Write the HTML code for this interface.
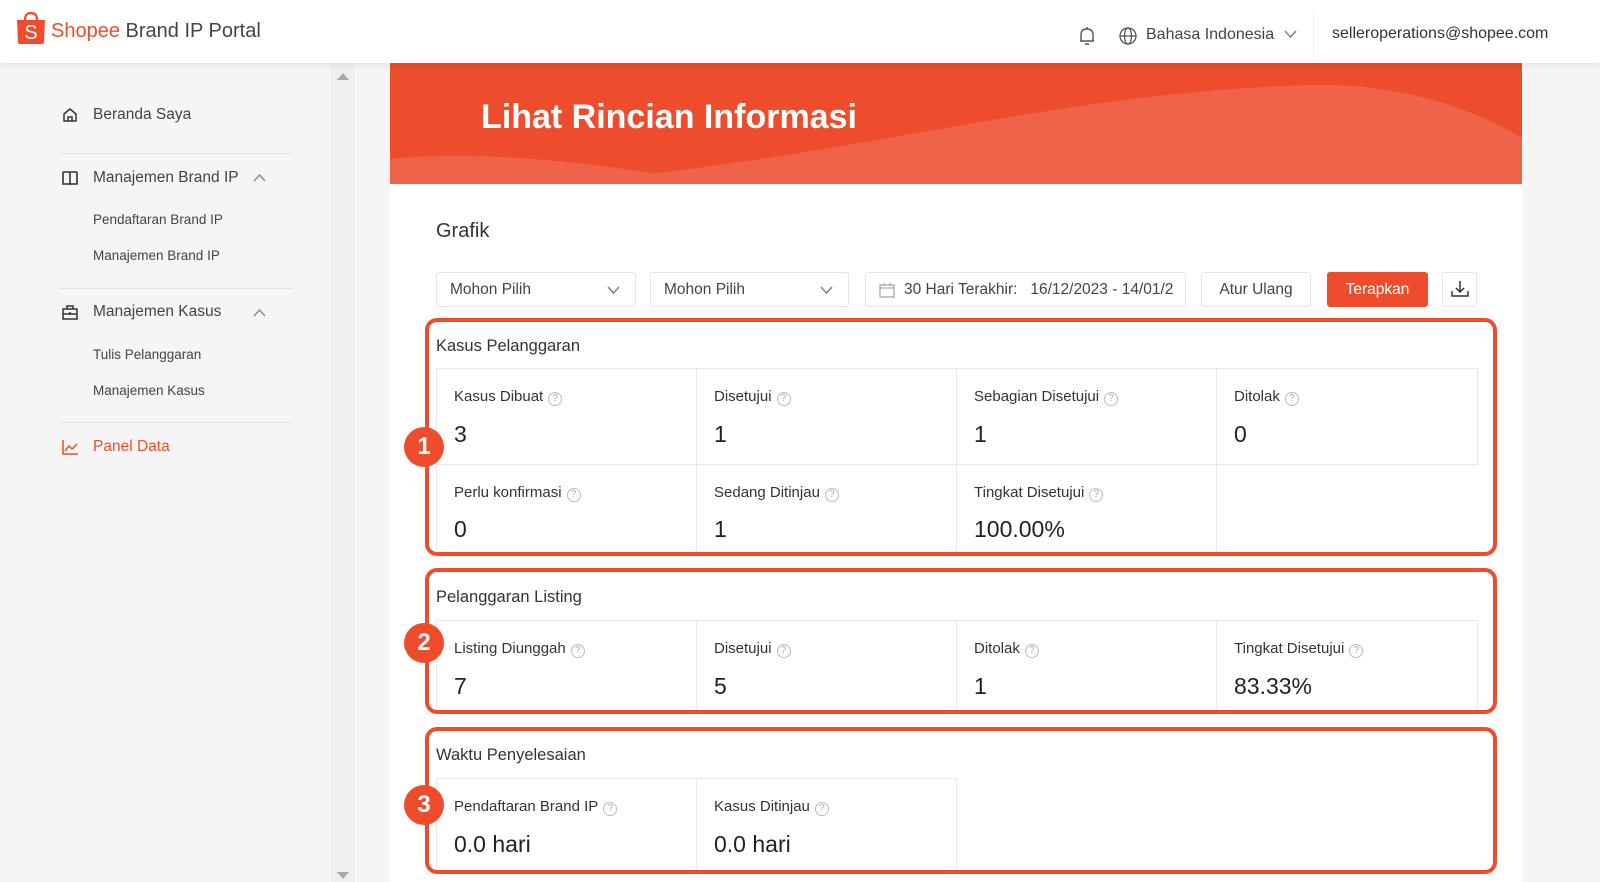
<!DOCTYPE html>
<html><head><meta charset="utf-8"><style>
*{margin:0;padding:0;box-sizing:border-box}
body{width:1600px;height:882px;overflow:hidden;background:#f5f5f5;font-family:"Liberation Sans",Arial,sans-serif;color:#333;position:relative}
.a{position:absolute;white-space:nowrap}
#hdr{position:absolute;left:0;top:0;width:1600px;height:63px;background:#fff;box-shadow:0 2px 6px rgba(0,0,0,.08);z-index:5}
.side{font-size:15.5px;color:#444}
.sub{font-size:13.5px;color:#444}
.dv{position:absolute;left:60px;width:232px;height:1px;background:#e2e2e2}
.inp{position:absolute;top:272px;height:35px;border:1px solid #e5e5e5;border-radius:3px;background:#fff;font-size:15.5px;color:#444;line-height:33px;padding-left:13px}
.box{position:absolute;left:425px;width:1072px;border:4px solid #ee4d2d;border-radius:12px;z-index:2}
.cell{position:absolute;border:1px solid #e8e8ee;background:#fff}
.lb{position:absolute;left:18px;font-size:15px;color:#333;white-space:nowrap}
.lb i{display:inline-block;width:14px;height:14px;border:1px solid #bbb;border-radius:50%;font-style:normal;font-size:10px;color:#aaa;text-align:center;line-height:12px;margin-left:5px;vertical-align:0px}
.vl{position:absolute;left:18px;font-size:23px;color:#222}
.bd{position:absolute;width:40px;height:40px;border-radius:50%;background:#ee4d2d;color:#fff;font-weight:bold;font-size:24px;text-align:center;line-height:40px;z-index:3}
.st{position:absolute;left:436px;font-size:16.5px;color:#333}
</style></head><body>
<div id="hdr">
 <svg class="a" style="left:16px;top:11px" width="30" height="33" viewBox="0 0 30 33"><path d="M9 9 Q9 2 15 2 Q21 2 21 9" fill="none" stroke="#ee4d2d" stroke-width="2.2"/><path d="M1 9 H29 L28 31 Q28 33 26 33 H4 Q2 33 2 31 Z" fill="#ee4d2d"/><text x="15" y="28" fill="#fff" font-size="20" text-anchor="middle" font-family="Liberation Sans">S</text></svg>
 <div class="a" style="left:51px;top:20px;font-size:20px"><span style="color:#ee4d2d">Shopee</span> <span style="color:#444">Brand IP Portal</span></div>
 <svg class="a" style="left:1078px;top:26px" width="18" height="20" viewBox="0 0 18 20"><path d="M3 15 V9 Q3 3 9 3 Q15 3 15 9 V15 H2 H16 M7 18 H11 M9 1 V3" fill="none" stroke="#555" stroke-width="1.4"/></svg>
 <svg class="a" style="left:1119px;top:27px" width="18" height="18" viewBox="0 0 18 18"><circle cx="9" cy="9" r="8" fill="none" stroke="#555" stroke-width="1.3"/><ellipse cx="9" cy="9" rx="3.5" ry="8" fill="none" stroke="#555" stroke-width="1.3"/><path d="M1 9H17" stroke="#555" stroke-width="1.3"/></svg>
 <div class="a" style="left:1146px;top:26px;font-size:16px;color:#444">Bahasa Indonesia</div>
 <svg class="a" style="left:1284px;top:30px" width="13" height="9"><path d="M1 1 L6.5 7 L12 1" fill="none" stroke="#777" stroke-width="1.3"/></svg>
 <div class="a" style="left:1313px;top:14px;width:1px;height:44px;background:#eee"></div>
 <div class="a" style="left:1332px;top:25px;font-size:16px;color:#333">selleroperations@shopee.com</div>
</div>
<div class="a" style="left:331px;top:63px;width:24px;height:819px;background:#efefef"></div>
<svg class="a" style="left:337px;top:73px" width="12" height="7"><path d="M0 7L6 0L12 7Z" fill="#aaa"/></svg>
<svg class="a" style="left:337px;top:872px" width="12" height="7"><path d="M0 0L6 7L12 0Z" fill="#aaa"/></svg>
<svg class="a" style="left:62px;top:107px" width="16" height="16" viewBox="0 0 16 16"><path d="M2 7 L8 2 L14 7 V14 H2 Z M6 14 V10 H10 V14" fill="none" stroke="#333" stroke-width="1.5"/></svg>
<div class="a side" style="left:93px;top:106px">Beranda Saya</div>
<div class="dv" style="top:153px"></div>
<svg class="a" style="left:62px;top:170px" width="16" height="16" viewBox="0 0 16 16"><path d="M1 2 H7 Q8 2 8 3 V15 M15 2 H9 Q8 2 8 3 M1 2 V14 H15 V2" fill="none" stroke="#333" stroke-width="1.6"/></svg>
<div class="a side" style="left:93px;top:169px">Manajemen Brand IP</div>
<svg class="a" style="left:253px;top:174px" width="13" height="8"><path d="M1 7 L6.5 1 L12 7" fill="none" stroke="#888" stroke-width="1.3"/></svg>
<div class="a sub" style="left:93px;top:212px">Pendaftaran Brand IP</div>
<div class="a sub" style="left:93px;top:248px">Manajemen Brand IP</div>
<div class="dv" style="top:288px"></div>
<svg class="a" style="left:62px;top:304px" width="16" height="16" viewBox="0 0 16 16"><path d="M1 5 H15 V15 H1 Z M5 5 V2 H11 V5 M1 10 H15 M8 8 V11" fill="none" stroke="#333" stroke-width="1.5"/></svg>
<div class="a side" style="left:93px;top:303px">Manajemen Kasus</div>
<svg class="a" style="left:253px;top:309px" width="13" height="8"><path d="M1 7 L6.5 1 L12 7" fill="none" stroke="#888" stroke-width="1.3"/></svg>
<div class="a sub" style="left:93px;top:347px">Tulis Pelanggaran</div>
<div class="a sub" style="left:93px;top:383px">Manajemen Kasus</div>
<div class="dv" style="top:422px"></div>
<svg class="a" style="left:62px;top:440px" width="16" height="15" viewBox="0 0 16 15"><path d="M1 0 V14 H16 M3 11 L7 6 L10 9 L15 4" fill="none" stroke="#ee4d2d" stroke-width="1.5"/></svg>
<div class="a" style="left:93px;top:438px;font-size:15.5px;color:#ee4d2d">Panel Data</div>

<div class="a" style="left:390px;top:63px;width:1132px;height:819px;background:#fff"></div>
<svg class="a" style="left:390px;top:63px" width="1132" height="121" viewBox="0 0 1132 121"><rect width="1132" height="121" fill="#ee4d2d"/><path d="M0 121 V96 C80 88 180 95 330 121 Z" fill="#ef6449"/><path d="M150 121 C450 100 650 30 920 22 C1020 20 1090 50 1132 75 L1132 121 Z" fill="#ef6449"/></svg>
<div class="a" style="left:481px;top:98px;font-size:34px;font-weight:bold;color:#fff">Lihat Rincian Informasi</div>
<div class="a" style="left:436px;top:220px;font-size:20px;color:#333">Grafik</div>
<div class="inp" style="left:436px;width:200px">Mohon Pilih</div>
<svg class="a" style="left:607px;top:286px" width="13" height="8"><path d="M1 1 L6.5 7 L12 1" fill="none" stroke="#777" stroke-width="1.3"/></svg>
<div class="inp" style="left:650px;width:199px">Mohon Pilih</div>
<svg class="a" style="left:820px;top:286px" width="13" height="8"><path d="M1 1 L6.5 7 L12 1" fill="none" stroke="#777" stroke-width="1.3"/></svg>
<div class="inp" style="left:865px;width:321px;padding-left:38px;overflow:hidden">30 Hari Terakhir:&nbsp;&nbsp;&nbsp;16/12/2023 - 14/01/2</div>
<svg class="a" style="left:879px;top:282px" width="16" height="16" viewBox="0 0 16 16"><rect x="1" y="3" width="14" height="12" fill="none" stroke="#999" stroke-width="1.1"/><path d="M1 6H15M5 1V4M11 1V4" stroke="#999"/></svg>
<div class="inp" style="left:1201px;width:110px;padding:0;text-align:center">Atur Ulang</div>
<div class="inp" style="left:1327px;width:101px;padding:0;text-align:center;background:#ee4d2d;border-color:#ee4d2d;color:#fff">Terapkan</div>
<div class="inp" style="left:1442px;width:35px"></div>
<svg class="a" style="left:1451px;top:280px" width="18" height="18" viewBox="0 0 18 18"><path d="M9 1 V12 M5 8 L9 12 L13 8 M1 11 V16 H17 V11" fill="none" stroke="#333" stroke-width="1.5"/></svg>

<div class="box" style="top:318px;height:238px"></div>
<div class="st" style="top:337px">Kasus Pelanggaran</div>
<div class="cell" style="left:436px;top:368px;width:1042px;height:188px;border-bottom:none"></div>
<div class="cell" style="left:436px;top:464px;width:1042px;height:1px;border:none;background:#e8e8ee"></div>
<div class="cell" style="left:696px;top:368px;width:1px;height:188px;border:none;background:#e8e8ee"></div>
<div class="cell" style="left:956px;top:368px;width:1px;height:188px;border:none;background:#e8e8ee"></div>
<div class="cell" style="left:1216px;top:368px;width:1px;height:188px;border:none;background:#e8e8ee"></div>
<div class="a" style="left:1217px;top:465px;width:262px;height:90px;background:#fff"></div>
<div class="a" style="left:436px;top:368px;width:1042px;height:188px">
 <div class="lb" style="top:20px">Kasus Dibuat<i>?</i></div><div class="vl" style="top:53px">3</div>
 <div class="lb" style="top:20px;left:278px">Disetujui<i>?</i></div><div class="vl" style="top:53px;left:278px">1</div>
 <div class="lb" style="top:20px;left:538px">Sebagian Disetujui<i>?</i></div><div class="vl" style="top:53px;left:538px">1</div>
 <div class="lb" style="top:20px;left:798px">Ditolak<i>?</i></div><div class="vl" style="top:53px;left:798px">0</div>
 <div class="lb" style="top:116px">Perlu konfirmasi<i>?</i></div><div class="vl" style="top:148px">0</div>
 <div class="lb" style="top:116px;left:278px">Sedang Ditinjau<i>?</i></div><div class="vl" style="top:148px;left:278px">1</div>
 <div class="lb" style="top:116px;left:538px">Tingkat Disetujui<i>?</i></div><div class="vl" style="top:148px;left:538px">100.00%</div>
</div>
<div class="bd" style="left:404px;top:427px">1</div>

<div class="box" style="top:568px;height:146px"></div>
<div class="st" style="top:588px">Pelanggaran Listing</div>
<div class="cell" style="left:436px;top:620px;width:1042px;height:91px;border-bottom:none"></div>
<div class="cell" style="left:696px;top:620px;width:1px;height:91px;border:none;background:#e8e8ee"></div>
<div class="cell" style="left:956px;top:620px;width:1px;height:91px;border:none;background:#e8e8ee"></div>
<div class="cell" style="left:1216px;top:620px;width:1px;height:91px;border:none;background:#e8e8ee"></div>
<div class="a" style="left:436px;top:620px;width:1042px;height:90px">
 <div class="lb" style="top:20px">Listing Diunggah<i>?</i></div><div class="vl" style="top:53px">7</div>
 <div class="lb" style="top:20px;left:278px">Disetujui<i>?</i></div><div class="vl" style="top:53px;left:278px">5</div>
 <div class="lb" style="top:20px;left:538px">Ditolak<i>?</i></div><div class="vl" style="top:53px;left:538px">1</div>
 <div class="lb" style="top:20px;left:798px">Tingkat Disetujui<i>?</i></div><div class="vl" style="top:53px;left:798px">83.33%</div>
</div>
<div class="bd" style="left:404px;top:623px">2</div>

<div class="box" style="top:727px;height:147px"></div>
<div class="st" style="top:746px">Waktu Penyelesaian</div>
<div class="cell" style="left:436px;top:778px;width:521px;height:93px;border-bottom:none"></div>
<div class="cell" style="left:696px;top:778px;width:1px;height:93px;border:none;background:#e8e8ee"></div>
<div class="a" style="left:436px;top:778px;width:521px;height:90px">
 <div class="lb" style="top:20px">Pendaftaran Brand IP<i>?</i></div><div class="vl" style="top:53px">0.0 hari</div>
 <div class="lb" style="top:20px;left:278px">Kasus Ditinjau<i>?</i></div><div class="vl" style="top:53px;left:278px">0.0 hari</div>
</div>
<div class="bd" style="left:404px;top:785px">3</div>
</body></html>
